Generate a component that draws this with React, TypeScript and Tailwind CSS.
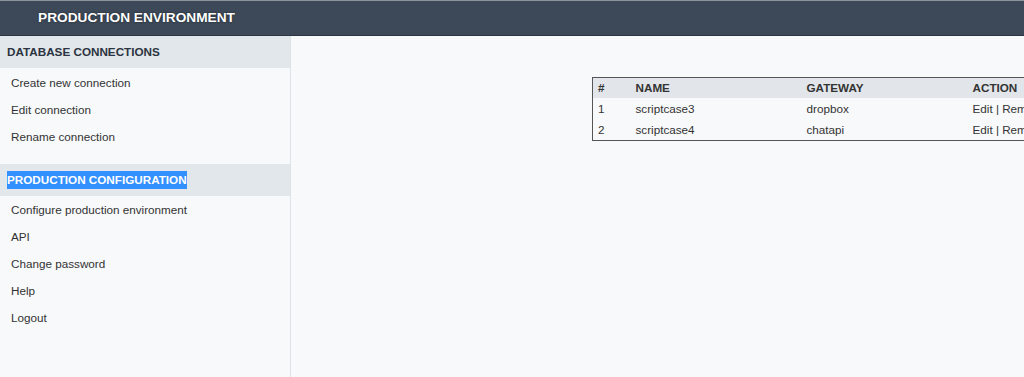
const dbLinks = ['Create new connection', 'Edit connection', 'Rename connection']
const prodLinks = ['Configure production environment', 'API', 'Change password', 'Help', 'Logout']

const rows = [
  { id: 1, name: 'scriptcase3', gateway: 'dropbox' },
  { id: 2, name: 'scriptcase4', gateway: 'chatapi' },
]

export default function App() {
  return (
    <div className="flex h-[377px] w-[1024px] flex-col overflow-hidden bg-[#f8f9fb] font-['Liberation_Sans',Arial,sans-serif] text-[#333]">
      <header className="flex h-9 shrink-0 items-center border-t border-b border-t-[#8c939b] border-b-[#2c3540] bg-[#3d4958] pl-[38px]">
        <h1 className="text-[13.7px] font-bold text-white [text-shadow:0_0_2px_#1a2028]">
          PRODUCTION ENVIRONMENT
        </h1>
      </header>

      <div className="flex min-h-0 flex-1">
        <aside className="w-[291px] shrink-0 border-r border-[#dde2e6] bg-[#f8f9fb]">
          <SectionHeading>DATABASE CONNECTIONS</SectionHeading>
          <ul className="pt-px">
            {dbLinks.map((label) => (
              <MenuItem key={label} label={label} />
            ))}
          </ul>

          <div className="mt-[14px]">
            <SectionHeading>
              <span className="bg-[#3390ff] text-white">PRODUCTION CONFIGURATION</span>
            </SectionHeading>
          </div>
          <ul>
            {prodLinks.map((label) => (
              <MenuItem key={label} label={label} />
            ))}
          </ul>
        </aside>

        <main className="min-w-0 flex-1 overflow-hidden pl-[301px] pt-[41px]">
          <table className="w-[580px] border-collapse border border-[#555] text-[11.7px]">
            <thead>
              <tr className="h-5 bg-[#e2e6ea] text-left text-[#333]">
                <th className="w-[38px] pl-[5px] font-bold">#</th>
                <th className="w-[171px] pl-[5px] font-bold">NAME</th>
                <th className="w-[166px] pl-[5px] font-bold">GATEWAY</th>
                <th className="pl-[5px] font-bold">ACTION</th>
              </tr>
            </thead>
            <tbody>
              {rows.map((r) => (
                <tr key={r.id} className="h-[21.5px] bg-[#f8f9fb]">
                  <td className="pl-[5px] pt-px">{r.id}</td>
                  <td className="pl-[5px] pt-px">{r.name}</td>
                  <td className="pl-[5px] pt-px">{r.gateway}</td>
                  <td className="whitespace-nowrap pl-[5px] pt-px">Edit | Remove</td>
                </tr>
              ))}
            </tbody>
          </table>
        </main>
      </div>
    </div>
  )
}

function SectionHeading({ children }: { children: React.ReactNode }) {
  return (
    <div className="flex h-8 items-center bg-[#e2e7eb] pl-[7px] text-[11.7px] font-bold text-[#2b3440]">
      {children}
    </div>
  )
}

function MenuItem({ label }: { label: string }) {
  return (
    <li className="flex h-[27px] items-center pl-[11px] pt-px text-[11.7px] text-[#333]">{label}</li>
  )
}
